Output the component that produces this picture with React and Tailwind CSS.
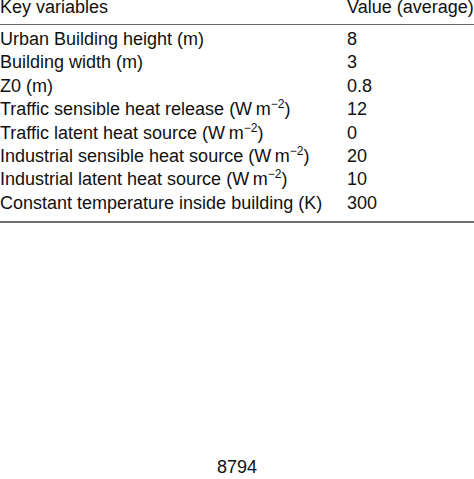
import React from "react";

const Wm = () => (
  <>
    (W&#8201;m<sup className="text-[12px] -top-[7px]">−2</sup>)
  </>
);

const rows = [
  [<>Urban Building height (m)</>, "8"],
  [<>Building width (m)</>, "3"],
  [<>Z0 (m)</>, "0.8"],
  [<>Traffic sensible heat release <Wm /></>, "12"],
  [<>Traffic latent heat source <Wm /></>, "0"],
  [<>Industrial sensible heat source <Wm /></>, "20"],
  [<>Industrial latent heat source <Wm /></>, "10"],
  [<>Constant temperature inside building (K)</>, "300"],
];

export default function App() {
  return (
    <div
      className="w-[474px] h-[479px] bg-white text-[#111] text-[18px] leading-[23.4px] overflow-hidden flex flex-col"
      style={{ fontFamily: '"Liberation Sans", Arial, sans-serif' }}
    >
      <div className="grid grid-cols-[347px_1fr] -mt-[4px] pb-[4.5px]">
        <div>Key variables</div>
        <div>Value (average)</div>
      </div>
      <div className="h-px bg-[#666]" />
      <div className="grid grid-cols-[347px_1fr] pt-[3px] pb-[6px]">
        {rows.map(([k, v], i) => (
          <React.Fragment key={i}>
            <div>{k}</div>
            <div>{v}</div>
          </React.Fragment>
        ))}
      </div>
      <div className="h-[2px] bg-[#6f6f6f]" />
      <div className="flex-1" />
      <div className="text-center">8794</div>
      <div className="h-0" />
    </div>
  );
}
